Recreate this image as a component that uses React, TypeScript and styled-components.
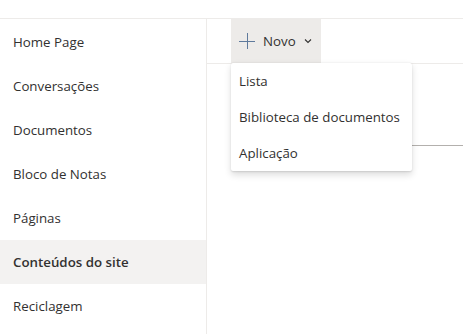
import { useState } from "react";
import styled, { createGlobalStyle } from "styled-components";

const GlobalStyle = createGlobalStyle`
  body {
    margin: 0;
    background: #ffffff;
    font-family: "Open Sans", "Noto Sans", sans-serif;
    color: #323130;
  }
`;

const navItems = [
  "Home Page",
  "Conversações",
  "Documentos",
  "Bloco de Notas",
  "Páginas",
  "Conteúdos do site",
  "Reciclagem",
];

const menuItems = ["Lista", "Biblioteca de documentos", "Aplicação"];

const App = () => {
  const [selected, setSelected] = useState("Conteúdos do site");

  return (
    <>
      <GlobalStyle />
      <Page>
        <TopBar />
        <Main>
          <Sidebar>
            {navItems.map((item) => (
              <NavItem
                key={item}
                $active={item === selected}
                onClick={() => setSelected(item)}
              >
                {item}
              </NavItem>
            ))}
          </Sidebar>
          <Content>
            <CommandBar>
              <NewButtonWrap>
                <NewButton>
                  <svg width="16" height="16" viewBox="0 0 16 16">
                    <path
                      d="M8 0v16M0 8h16"
                      stroke="#5f7a9c"
                      strokeWidth="1"
                      fill="none"
                      shapeRendering="crispEdges"
                    />
                  </svg>
                  <ButtonLabel>Novo</ButtonLabel>
                  <svg width="8" height="8" viewBox="0 0 8 8">
                    <path
                      d="M1 2.5l3 3 3-3"
                      stroke="#323130"
                      strokeWidth="1.1"
                      fill="none"
                    />
                  </svg>
                </NewButton>
                <Menu>
                  {menuItems.map((item) => (
                    <MenuItem key={item}>{item}</MenuItem>
                  ))}
                </Menu>
              </NewButtonWrap>
            </CommandBar>
            <ListHeader />
          </Content>
        </Main>
      </Page>
    </>
  );
};

export default App;

const Page = styled.div`
  width: 463px;
  height: 334px;
  overflow: hidden;
  display: flex;
  flex-direction: column;
`;

const TopBar = styled.div`
  height: 18px;
  border-bottom: 1px solid #edebe9;
  flex-shrink: 0;
`;

const Main = styled.div`
  display: flex;
  flex: 1;
`;

const Sidebar = styled.nav`
  width: 206px;
  flex-shrink: 0;
  border-right: 1px solid #edebe9;
  padding-top: 1px;
  display: flex;
  flex-direction: column;
`;

const NavItem = styled.div<{ $active: boolean }>`
  height: 44px;
  display: flex;
  align-items: center;
  padding-left: 13px;
  padding-bottom: 1px;
  box-sizing: border-box;
  font-size: 13.3px;
  font-weight: ${({ $active }) => ($active ? 600 : 400)};
  background: ${({ $active }) => ($active ? "#f3f2f1" : "transparent")};
  cursor: pointer;
`;

const Content = styled.div`
  flex: 1;
  display: flex;
  flex-direction: column;
`;

const CommandBar = styled.div`
  height: 44px;
  border-bottom: 1px solid #edebe9;
  padding-left: 24px;
  display: flex;
`;

const NewButtonWrap = styled.div`
  position: relative;
`;

const NewButton = styled.button`
  height: 44px;
  width: 90px;
  border: none;
  background: #edebe9;
  display: flex;
  align-items: center;
  padding: 0 0 1px 8px;
  font-family: inherit;
  color: #323130;
  cursor: pointer;
`;

const ButtonLabel = styled.span`
  font-size: 13.3px;
  margin: 0 8px 0 8px;
`;

const Menu = styled.div`
  position: absolute;
  top: 44px;
  left: 0;
  width: 181px;
  padding: 0;
  background: #ffffff;
  border-radius: 2px;
  box-shadow: 0 3.2px 7.2px rgba(0, 0, 0, 0.132),
    0 0.6px 1.8px rgba(0, 0, 0, 0.108);
  z-index: 2;
`;

const MenuItem = styled.div`
  height: 36px;
  display: flex;
  align-items: center;
  padding-left: 8px;
  padding-bottom: 1px;
  box-sizing: border-box;
  font-size: 13.3px;
  color: #323130;
  cursor: pointer;
`;

const ListHeader = styled.div`
  height: 81px;
  margin-left: 24px;
  border-bottom: 1px solid #b3b0ad;
`;
